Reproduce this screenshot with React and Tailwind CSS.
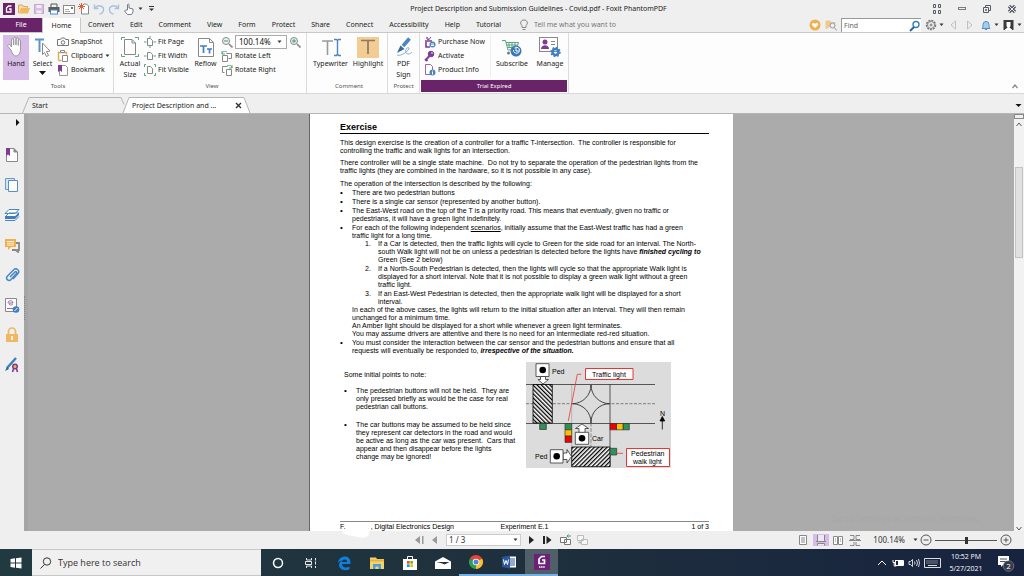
import React from 'react';

const Icon = ({ w = 12, h = 12, className = '', children }) => (
  <svg width={w} height={h} viewBox={`0 0 ${w} ${h}`} fill="none" className={`shrink-0 ${className}`} aria-hidden="true">
    {children}
  </svg>
);

const Caret = ({ className = 'text-[#333]' }) => (
  <Icon w={5} h={4} className={className}><path d="M.5.5h4L2.500 3z" fill="currentColor" /></Icon>
);

/* ---------- title bar ---------- */

const quickTools = [
  ['Foxit', <Icon><rect x="0" y="0" width="12" height="12" fill="#692368" /><path d="M8.500 3H5.500L3.500 5V9H8V6H6" stroke="#fff" strokeWidth="1.300" /></Icon>],
  ['Open', <Icon><path d="M.5 10V2h4l1 1.500h4V5" fill="#f5d9a8" stroke="#e0a850" /><path d="M1 10.500 3 5h9l-2 5.500z" fill="#f0b860" /></Icon>],
  ['Save', <Icon><path d="M1.500 1.500h9v9h-9z" fill="#d8c0e0" stroke="#c4a4d0" /><path d="M3.500 2h5v3h-5zM3.500 7.500h5v3h-5z" fill="#f4ecf8" /></Icon>],
  ['Print', <Icon><path d="M3 4V1h6v3" stroke="#555" /><rect x=".5" y="4" width="11" height="5" fill="#5d5d5d" /><rect x="2.500" y="7" width="7" height="4" fill="#fff" stroke="#4a86c0" /></Icon>],
  ['Email', <Icon><rect x=".5" y="2.500" width="11" height="8" fill="#fff" stroke="#888" /><path d="M2 8.500h5M2 6.500h4" stroke="#aaa" /><path d="M8 4h2v2H8z" fill="#777" /></Icon>],
  ['New', <Icon><path d="M3.500 3.500V11h7V3L8.500 1H6" fill="#fff" stroke="#888" /><path d="M3.500 0v7M0 3.500h7M1 1l5 5M6 1 1 6" stroke="#e05a3c" /></Icon>],
  ['Undo', <Icon><path d="M1.500 1.500v4h4M2 5c3-4 9-2 8.500 2 0 2-2 4-4 4" stroke="#a9c1da" strokeWidth="1.400" /></Icon>],
  ['Redo', <Icon><path d="M10.500 1.500v4h-4M10 5C7 1 1 3 1.500 7c0 2 2 4 4 4" stroke="#a9c1da" strokeWidth="1.400" /></Icon>],
  ['Touch mode', <Icon><path d="M4.500 7V1.500q1-1 1.500 0V5l4 1v3L8.500 11.500H4.500L1.500 8l1-1z" fill="#fff" stroke="#6d7f90" /></Icon>],
];

function TitleBar() {
  return (
    <header className="flex h-[18px] items-center">
      <div className="flex items-center gap-[3px] pl-[3px]">
        {quickTools.map(([name, icon]) => <button key={name} type="button" aria-label={name}>{icon}</button>)}
        <Caret />
        <button type="button" aria-label="Customize toolbar" className="pl-[3px]">
          <Icon w={5} h={6}><path d="M0 .5h5" stroke="#333" /><path d="M0 2.500h5L2.500 5z" fill="#333" /></Icon>
        </button>
      </div>
      <h1 className="flex-1 pr-2 text-center text-[7px] leading-[10px] text-[#222]">
        Project Description and Submission Guidelines - Covid.pdf - Foxit PhantomPDF
      </h1>
      <div className="flex items-center gap-[13px] pr-[6px]">
        <button type="button" aria-label="Ribbon display"><Icon><path d="M2.500 1.500h2v3h-2zM7.500 1.500h2v3h-2zM2.500 7.500h2v3h-2zM7.500 7.500h2v3h-2z" stroke="#555a66" /></Icon></button>
        <button type="button" aria-label="Minimize"><Icon><rect x="2.500" y="4.500" width="7" height="2" stroke="#777b85" /></Icon></button>
        <button type="button" aria-label="Restore"><Icon><path d="M4.500 4V2.500h5v5H8M2.500 4.500h5v5h-5zM4.500 6.500h1v1h-1z" stroke="#555a66" /></Icon></button>
        <button type="button" aria-label="Close"><Icon><path d="m3 3 6 6M9 3 3 9" stroke="#555a66" strokeWidth="3.200" /><path d="m3 3 6 6M9 3 3 9" stroke="#efefef" /></Icon></button>
      </div>
    </header>
  );
}

/* ---------- menu tabs ---------- */

const menus = ['Convert', 'Edit', 'Comment', 'View', 'Form', 'Protect', 'Share', 'Connect', 'Accessibility', 'Help', 'Tutorial'];

function MenuRow() {
  return (
    <nav className="flex h-[15px] items-stretch border-b border-[#c8c8c8] text-[7px] leading-[14px] text-[#222]">
      <button type="button" className="w-[42px] bg-[#692368] text-white">File</button>
      <button type="button" className="-mb-px w-[39px] border-x border-[#c8c8c8] bg-[#fdfdfd]">Home</button>
      <div className="flex items-center gap-4 pl-[7px]">
        {menus.map((m) => <button key={m} type="button">{m}</button>)}
      </div>
      <label className="flex flex-1 items-center gap-[5px] pl-[18px] text-[#777]">
        <Icon w={10}><path d="M5 1a3 3 0 0 0-2 5.500V8.500h4V6.500A3 3 0 0 0 5 1zM3.500 10.500h3" stroke="#888" /></Icon>
        <input aria-label="Tell me what you want to do" placeholder="Tell me what you want to" className="w-[90px] bg-transparent outline-none placeholder:text-[#777]" />
      </label>
      <div className="flex items-center gap-1 pr-[2px]">
        <button type="button" aria-label="Favorites"><Icon><circle cx="6" cy="6" r="5.500" fill="#f0b050" /><path d="M6 9 3 6c-1-2 2-3 3-1 1-2 4-1 3 1z" fill="#fff" /></Icon></button>
        <button type="button" aria-label="Search folder"><Icon><path d="M1 10V2h4l1 1.500h4V5" fill="#f0c890" stroke="#f0c890" /><circle cx="7.500" cy="6.500" r="2.500" fill="#eef" stroke="#999" /><path d="m9.500 8.500 2 3" stroke="#999" /></Icon></button>
        <label className="flex h-[14px] w-[80px] items-center border-t border-l border-[#999] bg-white pl-[2px]">
          <input aria-label="Find" placeholder="Find" className="min-w-0 flex-1 bg-transparent outline-none placeholder:text-[#666]" />
          <Icon><circle cx="7" cy="4.500" r="3" stroke="#3585bd" strokeWidth="1.400" /><path d="m5 7-4 4" stroke="#285f95" strokeWidth="1.800" /></Icon>
        </label>
        <button type="button" aria-label="Settings" className="flex items-center gap-[2px]">
          <Icon><circle cx="6" cy="6" r="4.500" stroke="#777" strokeWidth="1.500" strokeDasharray="2 1" /><circle cx="6" cy="6" r="3.500" stroke="#888" /><circle cx="6" cy="6" r="1" stroke="#777" /></Icon>
          <Caret />
        </button>
        <button type="button" aria-label="Previous"><Icon><path d="M7.500 2v8L3 6z" stroke="#c0c0c0" /></Icon></button>
        <button type="button" aria-label="Next"><Icon><path d="M3.500 2v8L8 6z" stroke="#c0c0c0" /></Icon></button>
        <button type="button" aria-label="Notifications" className="flex items-center gap-[2px]">
          <Icon><path d="M2 9.500c1-1 1-2 1-4a3 3 0 0 1 6 0c0 2 0 3 1 4z" fill="#a8ccec" stroke="#5090c8" /><path d="M5 10.500h2" stroke="#5090c8" /></Icon>
          <Caret />
        </button>
        <button type="button" aria-label="Account" className="flex items-center gap-[3px]">
          <Icon w={11}><path d="M.5 1h10v10H.5z" fill="#3b3b3b" /><path d="M3.500 3h4v4l-1 1.500 3 2.500h-8l3-2.500-1-1.500z" fill="#fff" /></Icon>
          <Caret />
        </button>
      </div>
    </nav>
  );
}

/* ---------- ribbon ---------- */

const Group = ({ label, className = '', children }) => (
  <section className={`flex flex-col border-r border-[#dcdcdc] ${className}`}>
    <div className="flex h-[47px] items-start pt-[2px]">{children}</div>
    <h2 className="h-3 text-center text-[6px] leading-3 text-[#555]">{label}</h2>
  </section>
);

const Big = ({ icon, lines, className = '', caret }) => (
  <button type="button" className={`flex h-[45px] flex-col items-center pt-px ${className}`}>
    {icon}
    {lines.map((l) => <span key={l} className="leading-[11px]">{l}</span>)}
    {caret && <Icon w={7} h={8}><path d="M0 2h7L3.500 6z" fill="#111" /></Icon>}
  </button>
);

const Row = ({ icon, label, caret }) => (
  <button type="button" className="flex h-[14px] items-center gap-[2px] whitespace-nowrap">
    {icon}<span>{label}</span>{caret && <Caret />}
  </button>
);

const Lens = ({ plus }) => (
  <Icon><circle cx="5" cy="5" r="3.500" fill="#e8f4ee" stroke="#888" /><path d={plus ? 'M3 5h4M5 3v4' : 'M3 5h4'} stroke="#3f9a72" /><path d="m8 8 3.500 3.500" stroke="#888" strokeWidth="1.600" /></Icon>
);

const Fit = ({ d }) => (
  <Icon><path d="M3.500 2.500h3l2 2v5h-5z" fill="#fff" stroke="#888" /><path d={d} stroke="#5aa582" /></Icon>
);

const handIcon = <Icon w={20} h={22}><path d="M5 14 2 10.500c-1-2 1-3 2-1.500l1.500 2V4c0-1.800 2.200-1.800 2.200 0v5V2.500c0-1.800 2.300-1.800 2.300 0V9 3c0-1.800 2.300-1.800 2.300 0v6.500V5c0-1.700 2.200-1.700 2.200 0v8c0 4-2 7-4.500 7S6.500 18 5 14z" fill="#fff" stroke="#999" /></Icon>;
const selectIcon = <Icon w={18} h={22}><path d="M1 3.500h9M5.500 3v13" stroke="#5b93cc" strokeWidth="2" /><path d="m8.500 7 7.500 8-3.500.5 2 4-2 1-2-4-2 2z" fill="#fff" stroke="#888" /></Icon>;
const actualIcon = <Icon w={20} h={22}><path d="M1.500 4V1.500H5M15 1.500h3.500V4M1.500 18v2.500H5M15 20.500h3.500V18" stroke="#5aa582" /><path d="M4.500 3.500H12l3.500 3.500v11.500h-11z" fill="#fff" stroke="#888" /><path d="M12 3.500V7h3.500" stroke="#888" /></Icon>;
const reflowIcon = <Icon w={18} h={22}><path d="M1.500 2.500h11l4 4v14h-15z" fill="#fff" stroke="#888" /><path d="M12.500 2.500v4h4" stroke="#888" /><path d="M3 10h7M6.500 10v7M10 13h5M12.500 13v4.500" stroke="#3f7fc0" strokeWidth="1.700" /></Icon>;
const typeIcon = <Icon w={22} h={22}><path d="M2 5h11M7.500 5v14" stroke="#999" strokeWidth="1.600" /><path d="M14 3.500h2.500l1 1 1-1H21M17.500 4v14M14 19.500h2.500l1-1.500 1 1.500H21" stroke="#4a86c0" strokeWidth="1.400" /></Icon>;
const highlightIcon = <Icon w={22} h={22}><path d="M0 1h22v21H0z" fill="#f2cc93" /><path d="M4 4.500h14M11 4.500V18" stroke="#8b7a64" strokeWidth="1.700" /></Icon>;
const signIcon = <Icon w={18} h={22}><path d="M14.500 2.500 8 10" stroke="#4a86c0" strokeWidth="3.600" /><path d="m5.500 9.500 4 3.500L2 17z" fill="#3569a0" /><path d="M2 19c4 2 13-5 12-7-2-2-6 5-1 6 2 0 3-1 4-2" stroke="#8aaed0" /></Icon>;
const cartIcon = <Icon w={20} h={22}><path d="M0 4.500h3.500L6 14h10M4 6.500h12.500l-1.500 5H5.500M7 6v6M10 6v6M13 6v6M4.500 9h11" stroke="#5aa582" /><circle cx="6.500" cy="17" r="1.500" fill="#777" /><circle cx="14" cy="15" r="5.500" fill="#3b78b5" /><path d="M14 12v3h3M11.500 14a3 3 0 1 0 1-2" stroke="#fff" /></Icon>;
const manageIcon = <Icon w={22} h={22}><rect x=".5" y="1.500" width="18" height="14" fill="#fff" stroke="#888" /><circle cx="6" cy="6" r="2.500" fill="#7d3b96" /><path d="M2 13c0-5 8-5 8 0z" fill="#7d3b96" /><path d="M12 5.500h4M12 8.500h4" stroke="#888" /><circle cx="16.500" cy="16" r="3" stroke="#3f7fc0" strokeWidth="2.600" /><circle cx="16.500" cy="16" r="4.500" stroke="#3f7fc0" strokeWidth="1.500" strokeDasharray="1.800 1.700" /></Icon>;

function Ribbon() {
  return (
    <div className="flex h-[61px] border-b border-[#d8d8d8] bg-[#fdfdfd] text-[7px] text-[#222]">
      <Group label="Tools" className="w-[114px] pl-[3px]">
        <Big icon={handIcon} lines={['Hand']} className="w-[26px] bg-[#d8bce8]" />
        <Big icon={selectIcon} lines={['Select']} caret className="w-[27px]" />
        <div className="flex flex-col pl-px">
          <Row label="SnapShot" icon={<Icon><path d="M.5 3.500h3l1-1.500h3l1 1.500h3v6H.5z" fill="#fff" stroke="#777" /><circle cx="6" cy="6.500" r="1.800" stroke="#777" /></Icon>} />
          <Row label="Clipboard" caret icon={<Icon><path d="M1.500 10.500v-8h8v2M1.500 10.500h3" stroke="#e0a850" strokeWidth="1.400" /><path d="M3.500.5h4v2h-4z" fill="#fff" stroke="#888" /><path d="M5.500 5.500h5v6h-5z" fill="#fff" stroke="#888" /></Icon>} />
          <Row label="Bookmark" icon={<Icon><path d="M2.500 1.500h6l2 2v8h-8z" fill="#fff" stroke="#999" /><path d="M1 1h4v7L3 6.500 1 8z" fill="#7d3b96" /></Icon>} />
        </div>
      </Group>
      <Group label="View" className="w-[193px] pl-1">
        <Big icon={actualIcon} lines={['Actual', 'Size']} className="w-[24px]" />
        <div className="flex w-[50px] flex-col pl-[2px]">
          <Row label="Fit Page" icon={<Fit d="M6 0v2M6 10v2M0 6h2.500M9.500 6H12" />} />
          <Row label="Fit Width" icon={<Fit d="M0 6h2.500M9.500 6H12" />} />
          <Row label="Fit Visible" icon={<Fit d="M2 .5H.5V3M10 .5h1.500V3M2 11.500H.5V9M10 11.500h1.500V9" />} />
        </div>
        <Big icon={reflowIcon} lines={['Reflow']} className="w-[27px]" />
        <div className="flex flex-col pl-[2px]">
          <div className="flex h-[14px] items-center gap-[2px]">
            <button type="button" aria-label="Zoom out"><Lens /></button>
            <label className="flex h-[14px] w-[52px] items-center border border-[#aaa] bg-white pr-1 pl-[3px] text-[8px] text-[#111]">
              <select aria-label="Zoom level" className="min-w-0 flex-1 appearance-none bg-transparent outline-none"><option>100.14%</option></select>
              <Caret />
            </label>
            <button type="button" aria-label="Zoom in"><Lens plus /></button>
          </div>
          <Row label="Rotate Left" icon={<Icon><path d="M5.500 3.500h5v5h-3M1.500 5.500h5v6h-5z" fill="#fff" stroke="#888" /><path d="M1 4c0-3 3-3 5-2M1 1v3h3" stroke="#5aa582" /></Icon>} />
          <Row label="Rotate Right" icon={<Icon><path d="M3.500 8.500h-2v-6h5M5.500 5.500h5v6h-5z" fill="#fff" stroke="#888" /><path d="M6 2c2-1 5-1 5 2M11 1v3H8" stroke="#5aa582" /></Icon>} />
        </div>
      </Group>
      <Group label="Comment" className="w-[81px] pl-1">
        <Big icon={typeIcon} lines={['Typewriter']} className="w-[39px]" />
        <Big icon={highlightIcon} lines={['Highlight']} className="w-[36px]" />
      </Group>
      <Group label="Protect" className="w-[32px]">
        <Big icon={signIcon} lines={['PDF', 'Sign']} className="w-[31px]" />
      </Group>
      <section className="flex flex-col border-r border-[#dcdcdc] px-px">
        <div className="flex h-[47px] items-start pt-[2px]">
          <div className="flex w-[70px] flex-col border-r border-[#eee] pl-[3px]">
            <Row label="Purchase Now" icon={<Icon><path d="M1 5h7M2 6v5h4" stroke="#7d3b96" strokeWidth="1.600" /><path d="M4.500 4C2 3 2 1 3.500 1.500L4.500 4 7 1" stroke="#7d3b96" /><circle cx="8.500" cy="8.500" r="3" fill="#4a86c0" /><path d="M7 8h3M7 9.500h3" stroke="#fff" /></Icon>} />
            <Row label="Activate" icon={<Icon><path d="M5.500 6 1 10.500M2 9.500 3.500 11" stroke="#7d3b96" strokeWidth="2" /><circle cx="7" cy="4" r="2.800" fill="#7d3b96" stroke="#7d3b96" /><circle cx="8" cy="3" r=".8" fill="#fff" /></Icon>} />
            <Row label="Product Info" icon={<Icon><path d="M1.500.5h5l2 2v8h-7z" fill="#fff" stroke="#9a65ad" /><circle cx="8.500" cy="8.500" r="3" fill="#4a86c0" /><path d="M8.500 6.500v1M8.500 8v2.500" stroke="#fff" /></Icon>} />
          </div>
          <Big icon={cartIcon} lines={['Subscribe']} className="w-[42px]" />
          <Big icon={manageIcon} lines={['Manage']} className="w-[34px]" />
        </div>
        <h2 className="h-3 bg-[#692368] text-center text-[6px] leading-3 text-white">Trial Expired</h2>
      </section>
      <div className="flex flex-1 items-end justify-end pr-[6px] pb-1">
        <button type="button" aria-label="Collapse ribbon"><Icon w={6} h={5}><path d="m.5 4 2.500-3 2.500 3" stroke="#888" strokeWidth="1.300" /></Icon></button>
      </div>
    </div>
  );
}

/* ---------- document tabs ---------- */

function DocTabs() {
  return (
    <div className="flex h-5 items-end border-b border-[#b5b5b5] pr-[2px] pl-[22px] text-[7px] leading-[15px] text-[#222]">
      <Icon w={8} h={16}><path d="M.5 16 7 .5h1" stroke="#b5b5b5" /></Icon>
      <button type="button" className="h-4 w-[90px] border-t border-[#b5b5b5] pl-[2px] text-left">Start</button>
      <Icon w={10} h={16}><path d="M4 16 9 .5h1V16z" fill="#fff" /><path d="M0 .5h1l3 7M3 16 9 .5h1" stroke="#b5b5b5" /></Icon>
      <div className="flex h-4 w-[112px] items-center justify-between border-t border-[#b5b5b5] bg-white pl-[2px]">
        <button type="button">Project Description and ...</button>
        <button type="button" aria-label="Close tab"><Icon w={7} h={7}><path d="m1 1 5 5M6 1 1 6" stroke="#333" strokeWidth="1.400" /></Icon></button>
      </div>
      <Icon w={9} h={16}><path d="M0 0h2l6 16H0z" fill="#fff" /><path d="M0 .5h2l6 15.500" stroke="#b5b5b5" /></Icon>
      <button type="button" aria-label="Tab list" className="mb-[5px] ml-auto"><Icon w={7} h={5}><path d="M.5 1h6L3.500 4z" fill="#111" /></Icon></button>
    </div>
  );
}

/* ---------- sidebar ---------- */

const panels = [
  ['Bookmarks', <Icon w={16} h={16}><path d="M2.500 1.500H10l3.500 3.500v9.500h-11z" fill="#fff" stroke="#888" /><path d="M10 1.500V5h3.500" fill="#888" stroke="#888" /><path d="M2 1h4v8L4 7.500 2 9z" fill="#7d3b96" /></Icon>],
  ['Pages', <Icon w={16} h={16}><path d="M1.500 1.500h9v11h-9z" fill="#d4e4f2" stroke="#6a9acb" /><path d="M4.500 3.500h9v11h-9z" fill="#fff" stroke="#5b8fc4" /></Icon>],
  ['Layers', <Icon w={16} h={16}><path d="M5 2.500h10l-4 4H1zM5 6h10l-4 4H1z" fill="#fff" stroke="#4a86c0" /><path d="M1 9h10l4-3v2l-4 4H1z" fill="#3f7fc0" /><path d="M1 13.500h10l4-4" stroke="#4a86c0" /></Icon>],
  ['Comments', <Icon w={16} h={16}><path d="M8 13h4l2 2v-2h1V6h-3" stroke="#888" strokeWidth="1.800" /><path d="M1 2h11v8H7l-3 3v-3H1z" fill="#f0b050" /><path d="M3 4.500h7M3 6.200h7M3 8h7" stroke="#fff" strokeWidth=".8" /></Icon>],
  ['Attachments', <Icon w={16} h={16}><path d="m6 10 5-5c1-1 2.500.5 1.500 1.500L7 12.500c-2.500 2.500-6-1-3.500-3.500l6-6c3-3 7 1 4.500 3.500L9 12" stroke="#4a86c0" strokeWidth="1.500" /></Icon>],
  ['Signatures', <Icon w={16} h={16}><path d="M1.500 1.500h11v13h-11z" fill="#fff" stroke="#888" /><path d="M4 6c0-3 5-3 5 0H5c0 3 3 2 4 1M3 11.500h6" stroke="#9a65ad" /><circle cx="12" cy="12.500" r="3.300" fill="#3f7fc0" /><path d="m10.500 14 3-3" stroke="#fff" /></Icon>],
  ['Security', <Icon w={16} h={16}><path d="M4.500 7V4.500a3.500 3.500 0 0 1 7 0V7" stroke="#eab867" strokeWidth="1.700" /><path d="M2 7h12v8H2z" fill="#f0b860" /><path d="M8 9v4" stroke="#fff" strokeWidth="1.600" /></Icon>],
  ['Digital signatures', <Icon w={16} h={16}><path d="m12 1-9 10" stroke="#3f7fc0" strokeWidth="2.500" /><path d="m1 14 2-4 2 2z" fill="#285f95" /><circle cx="11" cy="9.500" r="2.300" fill="#f0b050" stroke="#7d3b96" strokeWidth="1.500" /><path d="m9.500 12-1 3M12.500 12l1 3" stroke="#7d3b96" strokeWidth="1.600" /></Icon>],
];

function Sidebar() {
  return (
    <aside className="flex w-6 shrink-0 flex-col">
      <button type="button" aria-label="Expand panel" className="flex h-[26px] items-start justify-end pt-[5px] pr-1">
        <Icon w={4} h={7}><path d="M0 0v7l3.500-3.500z" fill="#111" /></Icon>
      </button>
      {panels.map(([name, icon]) => (
        <button key={name} type="button" aria-label={name} className="flex h-[30px] items-center justify-center">{icon}</button>
      ))}
    </aside>
  );
}

/* ---------- document ---------- */

const Bullet = ({ className = '', children }) => (
  <li className={`flex ${className}`}><span className="w-3 shrink-0 text-[8px]">•</span><div>{children}</div></li>
);

const Num = ({ n, children }) => (
  <li className="flex"><span className="w-[13px] shrink-0">{n}.</span><div>{children}</div></li>
);

function Intersection() {
  return (
    <svg width="145" height="106" viewBox="0 0 145 106" className="shrink-0 bg-[#dcdcdc]" fontFamily="Liberation Sans, sans-serif" fontSize="7" role="img" aria-label="Intersection layout">
      <defs>
        <pattern id="hatch-down" width="3" height="3" patternUnits="userSpaceOnUse" patternTransform="rotate(-45)">
          <rect width="3" height="3" fill="#fff" /><rect width="1.300" height="3" fill="#000" />
        </pattern>
        <pattern id="hatch-up" width="3" height="3" patternUnits="userSpaceOnUse" patternTransform="rotate(45)">
          <rect width="3" height="3" fill="#fff" /><rect width="1.300" height="3" fill="#000" />
        </pattern>
      </defs>
      <path d="M45.700 22V85" stroke="#b5b5b5" />
      <path d="M0 22.500H129M0 61.500H129M84 22V105" stroke="#333" strokeWidth=".8" />
      <path d="M0 41.700H129" stroke="#555" strokeWidth=".7" strokeDasharray="3 1.500" />
      <path d="M65 22v63" stroke="#555" strokeWidth=".6" strokeDasharray="4 1.500" />
      <path d="M65 23A18.700 18.700 0 0 0 83.700 41.700 18.700 18.700 0 0 0 65 61 18.700 18.700 0 0 0 46.700 41.700 18.700 18.700 0 0 0 65 23z" fill="#dcdcdc" stroke="#333" strokeWidth=".9" />
      <path d="M7 22.500h19.300v38.500H7z" fill="url(#hatch-down)" stroke="#000" strokeWidth=".8" />
      <path d="M45.700 85H84v19.700H45.700z" fill="url(#hatch-up)" stroke="#000" strokeWidth=".8" />
      <g fill="#fff" stroke="#333" strokeWidth=".8">
        <path d="M14.500 14.500h5v3h3L17 22l-5-4.500h2.500z" />
        <path d="M53 70.500v-4h-3.500L56 62l6.500 4.500H59v4z" />
        <path d="M37 91h4v-3.500l4.500 7L41 101v-3.500h-4z" />
        <path d="M10 1.700h13v12.800H10zM49.300 70.300h13.400v12H49.300zM24.300 87.700H37V101H24.300z" />
      </g>
      <g fill="#000"><circle cx="16.700" cy="8" r="3.300" /><circle cx="56" cy="76.300" r="3.300" /><circle cx="30.700" cy="94.300" r="3.300" /></g>
      <g stroke="#333" strokeWidth=".7">
        <path d="M13.700 61.500h6.600v6h-6.600zM39 61.500h6.700v6.300H39zM97 61.500h6.300v6.300H97zM84 86.300h6.700V93H84z" fill="#2f9158" />
        <path d="M39 67.800h6.700v6.300H39zM90.500 61.500H97v6.300h-6.500z" fill="#ffc000" />
        <path d="M39 74.100h6.700v6.300H39zM84 61.500h6.500v6.300H84z" fill="#f00000" />
      </g>
      <path d="M55.300 12.300h-4L42.300 59M90.700 91.300H97" stroke="#e33" strokeWidth=".8" fill="none" />
      <path d="M59.500 6.500h47.500v11H59.500zM100.500 86.500h43v18h-43z" fill="#fff" stroke="#e33" />
      <path d="M136.300 67.500V57M134 59l2.300-4.500 2.400 4.500z" stroke="#000" strokeWidth=".8" />
      <text x="26" y="11.500">Ped</text><text x="66" y="14.500">Traffic light</text><text x="66" y="79">Car</text>
      <text x="9" y="96.500">Ped</text><text x="105" y="94">Pedestrian</text><text x="107" y="102">walk light</text><text x="134" y="53.500">N</text>
    </svg>
  );
}

function Page() {
  return (
    <article className="relative flex w-[424px] max-w-full flex-col border-l border-[#666] bg-white pt-2 pr-6 pl-[30px] font-['Liberation_Sans',Arial,sans-serif] text-[7px] leading-[8px] whitespace-nowrap text-black">
      <h2 className="border-b border-black text-[9px] leading-[11px] font-bold">Exercise</h2>
      <p className="pt-[5px]">This design exercise is the creation of a controller for a traffic T-intersection.&nbsp; The controller is responsible for<br />controlling the traffic and walk lights for an intersection.</p>
      <p className="pt-1">There controller will be a single state machine.&nbsp; Do not try to separate the operation of the pedestrian lights from the<br />traffic lights (they are combined in the hardware, so it is not possible in any case).</p>
      <p className="pt-[5px]">The operation of the intersection is described by the following:</p>
      <ul className="flex flex-col gap-px pt-px">
        <Bullet>There are two pedestrian buttons</Bullet>
        <Bullet>There is a single car sensor (represented by another button).</Bullet>
        <Bullet>The East-West road on the top of the T is a priority road. This means that <em>eventually</em>, given no traffic or<br />pedestrians, it will have a green light indefinitely.</Bullet>
        <Bullet>
          For each of the following independent <u>scenarios</u>, initially assume that the East-West traffic has had a green<br />traffic light for a long time.
          <ol className="flex flex-col gap-px pl-[13px]">
            <Num n={1}>If a Car is detected, then the traffic lights will cycle to Green for the side road for an interval. The North-<br />south Walk light will not be on unless a pedestrian is detected before the lights have <strong><em>finished cycling to</em></strong><br />Green (See 2 below)</Num>
            <Num n={2}>If a North-South Pedestrian is detected, then the lights will cycle so that the appropriate Walk light is<br />displayed for a short interval. Note that it is not possible to display a green walk light without a green<br />traffic light.</Num>
            <Num n={3}>If an East-West Pedestrian is detected, then the appropriate walk light will be displayed for a short<br />interval.</Num>
          </ol>
          <p>In each of the above cases, the lights will return to the initial situation after an interval. They will then remain<br />unchanged for a minimum time.<br />An Amber light should be displayed for a short while whenever a green light terminates.<br />You may assume drivers are attentive and there is no need for an intermediate red-red situation.</p>
        </Bullet>
        <Bullet>You must consider the interaction between the car sensor and the pedestrian buttons and ensure that all<br />requests will eventually be responded to, <strong><em>irrespective of the situation.</em></strong></Bullet>
      </ul>
      <div className="flex pt-[7px]">
        <div className="w-[186px] shrink-0 pt-[9px] pl-1">
          <p>Some initial points to note:</p>
          <ul className="flex flex-col gap-[10px] pt-2">
            <Bullet>The pedestrian buttons will not be held.&nbsp; They are<br />only pressed briefly as would be the case for real<br />pedestrian call buttons.</Bullet>
            <Bullet>The car buttons may be assumed to be held since<br />they represent car detectors in the road and would<br />be active as long as the car was present.&nbsp; Cars that<br />appear and then disappear before the lights<br />change may be ignored!</Bullet>
          </ul>
        </div>
        <Intersection />
      </div>
      <footer className="mt-auto grid grid-cols-3 border-t border-[#888] pt-px">
        <span>F. &nbsp; &nbsp; &nbsp; &nbsp; &nbsp; . , Digital Electronics Design</span>
        <span className="text-center">Experiment E.1</span>
        <span className="text-right">1 of 3</span>
      </footer>
      <svg width="40" height="22" viewBox="0 0 40 22" className="absolute -bottom-2 left-7 z-10" aria-hidden="true">
        <path d="M9 7c5-1 14-1 14 3 7-1 9 2 8 5 2 4-5 7-11 5-6-1-14-2-16-5 5-1 6-4 5-8z" fill="#fff" />
      </svg>
    </article>
  );
}

function Viewer() {
  return (
    <main className="relative flex min-h-0 flex-1">
      <Sidebar />
      <div className="flex w-1 items-center bg-[#a5a5a5] pb-[30px]"><span className="h-6 w-[2px] border-l border-dotted border-[#888]" /></div>
      <div className="relative flex flex-1 justify-center bg-[#ababab]">
        <Page />
        <p className="absolute right-[34px] bottom-[6px] text-[9px] leading-3 text-[#a7a7a7]">Go to Settings to activate Windows.</p>
      </div>
      <div className="flex w-[10px] flex-col items-center bg-[#f2f2f2]">
        <span className="h-[5px] w-full border border-[#888] bg-[#efefef]" />
        <button type="button" aria-label="Scroll up" className="pt-[3px]"><Icon w={6} h={5}><path d="m.5 4 2.500-3 2.500 3" stroke="#555" /></Icon></button>
        <span className="mt-10 h-[91px] w-2 border border-[#c4c4c4] bg-[#e0e0e0]" />
        <button type="button" aria-label="Scroll down" className="mt-auto"><Icon w={6} h={5}><path d="M.5 1 3 4l2.500-3" stroke="#555" /></Icon></button>
      </div>
    </main>
  );
}

/* ---------- status bar ---------- */

function StatusBar() {
  return (
    <div className="flex h-[18px] items-center text-[8px] text-[#333]">
      <div className="flex-1" />
      <div className="mr-2 flex items-center gap-2">
        <button type="button" aria-label="First page"><Icon w={9} h={8}><path d="M5 0v8L0 4zM7 0h1.500v8H7z" fill="#999" /></Icon></button>
        <button type="button" aria-label="Previous page"><Icon w={6} h={8}><path d="M5 0v8L0 4z" fill="#999" /></Icon></button>
        <label className="flex h-3 w-[75px] items-center border border-[#ccc] bg-white pr-[2px] pl-[2px]">
          <input aria-label="Page number" defaultValue="1 / 3" className="min-w-0 flex-1 bg-transparent leading-[10px] outline-none" />
          <Caret />
        </label>
        <button type="button" aria-label="Next page"><Icon w={6} h={8}><path d="M0 0v8l5-4z" fill="#222" /></Icon></button>
        <button type="button" aria-label="Last page"><Icon w={9} h={8}><path d="M0 0h2v8H0zM3.500 0v8l5-4z" fill="#222" /></Icon></button>
        <div className="flex gap-[5px]">
          <button type="button" aria-label="Previous view"><Icon><path d="M.5 3.500h6v5h-6zM4.500 5.500h6v5h-6z" fill="#fff" stroke="#777" /><path d="M11 2H7M8.500.5 7 2l1.500 1.500" stroke="#3f9a72" /></Icon></button>
          <button type="button" aria-label="Next view"><Icon><path d="M.5 1.500h6v5h-6zM4.500 5.500h6v5h-6z" fill="#f6f6f6" stroke="#bbb" /><path d="M1 8.500h3M2.500 7 4 8.500 2.500 10" stroke="#a5c8b8" /></Icon></button>
        </div>
      </div>
      <div className="flex flex-1 items-center justify-end pr-3">
        <div className="flex items-center gap-[3px]">
          <button type="button" aria-label="Single page" className="px-[2px]"><Icon w={10}><path d="M1.500 1.500h7v9h-7zM3 4h4M3 6h4M3 8h4" fill="#fff" stroke="#888" /></Icon></button>
          <button type="button" aria-label="Continuous" className="bg-[#d8bce8] px-[2px]"><Icon><path d="M2.500 1v6.500h7V1M1 7.500h10M2.500 11.500v-2h7v2" fill="#efe6f5" stroke="#888" /></Icon></button>
          <button type="button" aria-label="Facing"><Icon><path d="M1.500 2.500h4v8h-4zM6.500 2.500h4v8h-4zM3 5h1M3 7h1M8 5h1M8 7h1" fill="#fff" stroke="#888" /></Icon></button>
          <button type="button" aria-label="Continuous facing" className="px-[2px]"><Icon><path d="M1 1.500h4v4H1M11 1.500H7v4h4M0 6.500h12M5 8v3.500H1M7 8v3.500h4" stroke="#888" /></Icon></button>
        </div>
        <span className="pl-[10px]">100.14%</span>
        <span className="pr-[2px] pl-2"><Caret /></span>
        <button type="button" aria-label="Zoom out"><Icon><circle cx="6" cy="6" r="5" stroke="#555" /><path d="M3.500 6h5" stroke="#555" /></Icon></button>
        <input type="range" aria-label="Zoom" defaultValue="50" className="mx-[3px] h-3 w-[62px] appearance-none bg-transparent [&::-webkit-slider-runnable-track]:h-px [&::-webkit-slider-runnable-track]:bg-[#555] [&::-webkit-slider-thumb]:-mt-[3px] [&::-webkit-slider-thumb]:h-[7px] [&::-webkit-slider-thumb]:w-[3px] [&::-webkit-slider-thumb]:appearance-none [&::-webkit-slider-thumb]:bg-[#333]" />
        <button type="button" aria-label="Zoom in"><Icon><circle cx="6" cy="6" r="5" stroke="#555" /><path d="M3.500 6h5M6 3.500v5" stroke="#555" /></Icon></button>
      </div>
    </div>
  );
}

/* ---------- taskbar ---------- */

const apps = [
  ['Cortana', '', <Icon w={16} h={16}><circle cx="8" cy="8" r="4.500" stroke="#fff" strokeWidth="1.500" /></Icon>],
  ['Task view', '', <Icon w={16} h={16}><path d="M3.500 3v2h5V3M3.500 13v-2h5v2M2.500 6.500h6v3h-6zM12.500 3v2.500M12.500 6.500v3M12.500 11v2" stroke="#e8e8e8" /></Icon>],
  ['Edge', '', <Icon w={16} h={16}><path d="M2 8c.5-8 12.500-9 12.500-.5v1.500H6c0 4 5 4 7.500 2.500v2.700C9 16.500 3 14.500 3 10c0-2 1.500-4 3.500-4.500C4.500 5.500 3 6.500 2 8zm4-1h5c0-3.500-5-3-5 0z" fill="#0e7fdc" /></Icon>],
  ['File Explorer', '', <Icon w={16} h={16}><path d="M1 2.500h6l1 1.500h7v10H1z" fill="#f7d26a" /><path d="M1 4.500h14v2H1z" fill="#e8b440" /><path d="M4 14V9h8v5h-2.500v-2.500h-3V14z" fill="#4aa0dc" /></Icon>],
  ['Store', '', <Icon w={16} h={16}><path d="M5.500 4.500v-3h5v3" stroke="#fff" /><path d="M1 4h14v11H1z" fill="#fff" /><path d="M5 6h2.700v2.700H5z" fill="#f25022" /><path d="M8.300 6H11v2.700H8.300z" fill="#7fba00" /><path d="M5 9.300h2.700V12H5z" fill="#00a4ef" /><path d="M8.300 9.300H11V12H8.300z" fill="#ffb900" /></Icon>],
  ['Mail', '', <Icon w={16} h={16}><path d="M0 6.500 8 2l8 4.500V14H0z" fill="#fff" /><path d="M1.500 7h13L9.500 9.500l-2-1z" fill="#20343d" /></Icon>],
  ['Chrome', 'border-b-2 border-[#76b0e0]', <Icon w={16} h={16}><path d="M8 8 1.900 4.500A7 7 0 0 1 14.100 4.500z" fill="#ea4335" /><path d="M8 8 14.100 4.500A7 7 0 0 1 8 15z" fill="#fbc02d" /><path d="M8 8v7A7 7 0 0 1 1.900 4.500z" fill="#2e9e4f" /><circle cx="8" cy="8" r="3.300" fill="#fff" /><circle cx="8" cy="8" r="2.500" fill="#4285f4" /></Icon>],
  ['Word', 'border-b-2 border-[#76b0e0]', <Icon w={16} h={16}><path d="M8 2.500h7v11H8z" fill="#fff" /><path d="M9 5h5M9 7h5M9 9h5M9 11h5" stroke="#2b579a" /><path d="m1 3 8-1.500v13L1 13z" fill="#2b579a" /><path d="m2.500 5.500 1 5L5 6.500l1.500 4 1-5" stroke="#fff" /></Icon>],
  ['Foxit PhantomPDF', 'border-b-2 border-[#76b0e0] bg-[#505f68]', <Icon w={16} h={16}><path d="M0 0h16v16H0z" fill="#6d2077" /><path d="M11 2.500H7.500L5 5v4.500h5.500V6H8" stroke="#fff" strokeWidth="1.700" /><path d="M5 13h6" stroke="#fff" strokeWidth="1.600" strokeDasharray="1.500 .6" /></Icon>],
];

function Taskbar() {
  return (
    <footer className="flex h-[27px] items-stretch bg-linear-to-r from-[#213a41] via-[#1e303d] to-[#18233f] font-['Open_Sans',sans-serif] text-white">
      <button type="button" aria-label="Start" className="flex w-8 items-center justify-center">
        <Icon><path d="m.5 2 4.500-.7v4.200H.5zM6 1.200 11.500.5v5H6zM.5 6.500H5v4.200L.5 10zM6 6.500h5.500v5L6 10.800z" fill="#fff" /></Icon>
      </button>
      <label className="flex w-[229px] items-center gap-[6px] border-y border-[#c8c8c8] bg-[#f0f0f0] pl-2">
        <Icon><circle cx="7" cy="4.500" r="3.700" stroke="#333" /><path d="M4.500 7.500.5 11.500" stroke="#333" /></Icon>
        <input aria-label="Search" placeholder="Type here to search" className="min-w-0 flex-1 bg-transparent text-[9px] outline-none placeholder:text-[#333]" />
      </label>
      {apps.map(([name, cls, icon]) => (
        <button key={name} type="button" aria-label={name} className={`flex w-[33px] items-center justify-center ${cls}`}>{icon}</button>
      ))}
      <div className="ml-auto flex items-center gap-1 pr-[9px]">
        <button type="button" aria-label="Hidden icons"><Icon><path d="m2 8 4-4 4 4" stroke="#fff" /></Icon></button>
        <Icon><path d="M3.500 3.500h8v5h-8z" stroke="#fff" /><path d="M6 4h5v4H6z" fill="#fff" /><path d="M1 3v2.500h2.500V3M2.200 5v4h2" stroke="#fff" /></Icon>
        <Icon><path d="M1 4.500h1.500l2-2v7l-2-2H1zM6.500 4.500q1 1.500 0 3M8.500 3q2 3 0 6M10.500 2q2 4 0 8" stroke="#fff" strokeWidth=".8" /></Icon>
        <Icon w={17}><path d="M.5 1.500h16v9H.5z" stroke="#ddd" /><path d="M2.500 4h12M2.500 6h12" stroke="#ddd" strokeDasharray="1 1" /><path d="M4 8.500h9" stroke="#ddd" /></Icon>
        <div className="flex w-[42px] flex-col items-center text-[7px] leading-[12px]"><span>10:52 PM</span><span>5/27/2021</span></div>
        <button type="button" aria-label="Notifications: 2" className="pl-[6px]">
          <svg width="18" height="18" viewBox="0 0 18 18" aria-hidden="true"><path d="M1 2h11v9H6l-2 2v-2H1z" fill="#fff" /><path d="M3 5h7M3 7.500h7" stroke="#20293f" strokeWidth=".8" /><circle cx="11.500" cy="12" r="5.300" fill="#333b48" stroke="#aaa" strokeWidth=".5" /><text x="9.300" y="15" fontSize="8" fill="#fff">2</text></svg>
        </button>
      </div>
    </footer>
  );
}

export default function App() {
  return (
    <div className="flex h-screen flex-col overflow-hidden bg-[#efefef] font-['Noto_Sans',sans-serif]">
      <TitleBar />
      <MenuRow />
      <Ribbon />
      <DocTabs />
      <Viewer />
      <StatusBar />
      <Taskbar />
    </div>
  );
}
